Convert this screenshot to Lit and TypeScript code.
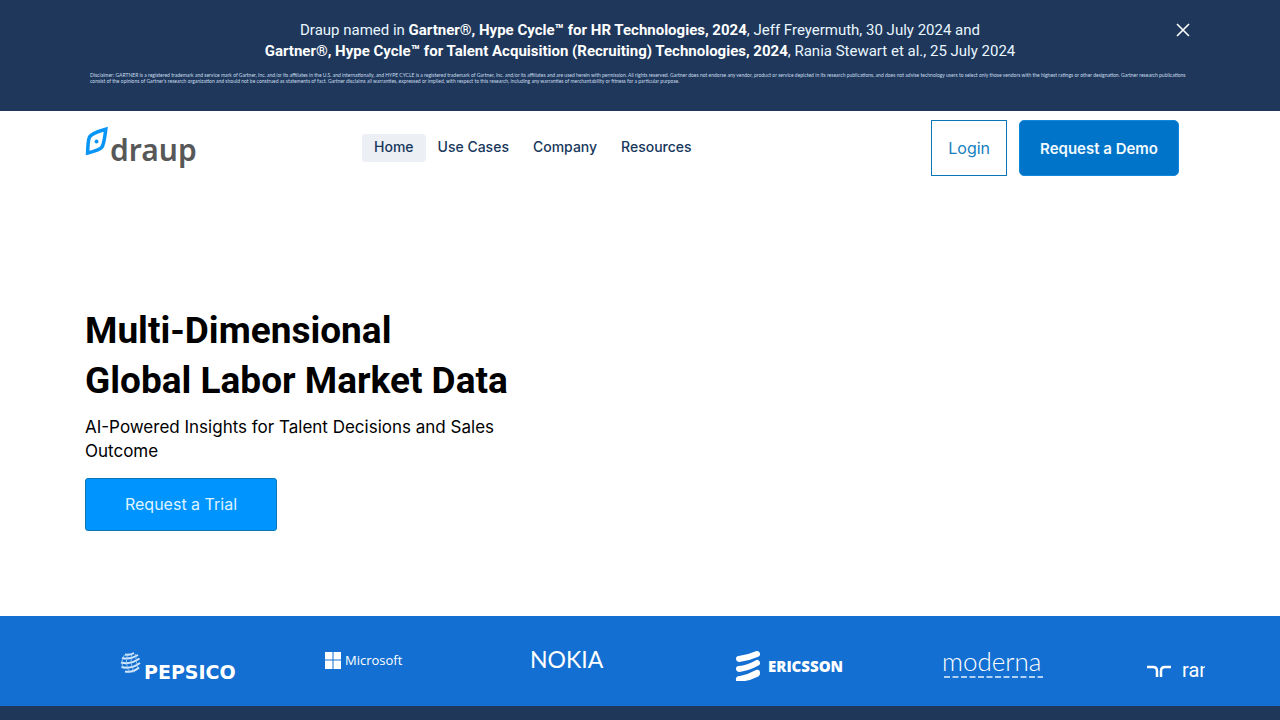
import { LitElement, html, css, svg } from "lit";
import { customElement, state } from "lit/decorators.js";

const logos = [
  {
    name: "PepsiCo",
    art: svg`
      <g fill="none" stroke="#d3e8fb" stroke-width="2">
        <path d="M5 8.500Q10 9.500 14 7M2 12Q10 14 18 9M1 16.500Q10 19 19.500 12.500M1.500 21Q11 23.500 20 17M5 25.500Q13 27 19 21.500" />
      </g>
      <g fill="none" stroke="#a9cff3" stroke-width="0.800">
        <path d="M4.500 9Q0 15 3.500 23M8 7.500Q4 16 9.500 26.500M12 7Q9.500 16 14 26.500M15.500 8Q16 16 18 23" />
      </g>
      <text class="pepsico" x="24" y="33">PEPSICO</text>`,
  },
  {
    name: "Microsoft",
    art: svg`
      <path fill="#fff" d="M0 6h7.500v7.500H0zM8.500 6H16v7.500H8.500zM0 14.500h7.500V23H0zM8.500 14.500H16V23H8.500z" />
      <text class="microsoft" x="20" y="19">Microsoft</text>`,
  },
  { name: "Nokia", art: svg`<text class="nokia" x="-1" y="22">NOKIA</text>` },
  {
    name: "Ericsson",
    art: svg`
      <g fill="none" stroke="#fff" stroke-width="6" stroke-linecap="round">
        <path d="M3 13Q12 12 21 8M3 23Q12 22 21 17" />
      </g>
      <path fill="#fff" d="M0 35Q-1 30 4 30Q13 28 20 24Q24 23 24 27Q24 30 21 31Q15 34 9 35Z" />
      <text class="ericsson" x="32" y="26">ERICSSON</text>`,
  },
  {
    name: "Moderna",
    art: svg`
      <text class="moderna" x="0" y="25">moderna</text>
      <path fill="none" stroke="#e6f2fd" stroke-width="1.500" stroke-dasharray="6 2.500" d="M2 31H101" />`,
  },
  {
    name: "Randstad",
    art: svg`
      <path fill="none" stroke="#fff" stroke-width="2.500" d="M0 21H6Q10 21 10 25V31M24 21H18Q14 21 14 25V31" />
      <text class="randstad" x="35" y="31">randstad</text>`,
  },
];

@customElement("app-root")
class AppRoot extends LitElement {
  static styles = css`
    :host {
      display: block;
      min-height: 100vh;
      background: #1f385a;
      color: #000;
      font-family: "Inter", "Liberation Sans", sans-serif;
    }
    * {
      box-sizing: border-box;
    }
    a {
      color: inherit;
      text-decoration: none;
    }
    .container {
      width: 100%;
      max-width: 1140px;
      margin: 0 auto;
      padding: 0 15px;
    }
    .banner {
      position: relative;
      background: #1e375b;
      color: #e9f6ff;
      padding: 20px 0 27px;
    }
    .notice {
      margin: 0;
      text-align: center;
      font: 15px/21px "Roboto", sans-serif;
    }
    .notice b {
      color: #fff;
    }
    .disclaimer {
      margin: 10px 5px 0;
      color: #c9dcec;
      font: 5px/6px "Lato", sans-serif;
    }
    .close {
      position: absolute;
      top: 22px;
      right: 89px;
      display: grid;
      padding: 0;
      border: 0;
      background: none;
      cursor: pointer;
    }
    .page {
      background: #fff;
    }
    .header {
      display: flex;
      align-items: center;
      padding-top: 9px;
      padding-right: 31px;
    }
    .brand {
      display: flex;
      margin-right: 157px;
    }
    .brand text {
      font: 600 30px "Noto Sans", sans-serif;
      fill: #585858;
    }
    .nav {
      display: flex;
    }
    .nav a {
      padding: 0 12px 2px;
      border-radius: 4px;
      color: #17375c;
      font-size: 14px;
      font-weight: 500;
      line-height: 26px;
    }
    .nav .active {
      background: #eceff4;
    }
    .actions {
      display: flex;
      gap: 12px;
      margin-left: auto;
    }
    .login,
    .demo,
    .trial {
      display: grid;
      place-items: center;
      border: 1px solid #0a76b5;
    }
    .login {
      height: 56px;
      padding: 0 16px;
      color: #157ebe;
      font-size: 16px;
    }
    .demo {
      height: 56px;
      padding: 0 20px;
      border-color: #1187dc;
      border-radius: 5px;
      background: #0074c8;
      color: #f2faff;
      font-size: 15px;
      font-weight: 600;
    }
    .hero {
      padding-top: 130px;
      padding-bottom: 85px;
    }
    h1 {
      margin: 0;
      font: bold 37px/50px "Roboto", sans-serif;
    }
    .lead {
      max-width: 450px;
      margin: 9px 0 15px;
      font-size: 17px;
      line-height: 24px;
    }
    .trial {
      width: 192px;
      height: 53px;
      padding-bottom: 2px;
      border-radius: 3px;
      background: #0094ff;
      color: #dff3ff;
      font-size: 16px;
    }
    .clients {
      background: #136fd1;
      padding: 30px 0 24px;
    }
    .track {
      display: flex;
      width: 100%;
      max-width: 1130px;
      margin: 0 auto;
      padding: 0;
      overflow: hidden;
      list-style: none;
    }
    .slide {
      flex: 0 0 calc(100% / 5.5);
      padding-left: 45px;
    }
    .slide svg {
      display: block;
      overflow: visible;
    }
    .slide text {
      fill: #fff;
    }
    .pepsico {
      font: bold 19px "DejaVu Sans", sans-serif;
    }
    .microsoft {
      font: 13px "Open Sans", sans-serif;
    }
    .nokia {
      font: 23px "Lato", sans-serif;
    }
    .ericsson {
      font: 800 15px "Open Sans", sans-serif;
    }
    .moderna {
      font: 300 26px "Lato", sans-serif;
    }
    .randstad {
      font: 20px "Roboto", sans-serif;
    }
  `;

  @state() private bannerOpen = true;

  private renderBanner() {
    return html`<aside class="banner">
      <div class="container">
        <p class="notice">
          Draup named in <b>Gartner®, Hype Cycle™ for HR Technologies, 2024</b>, Jeff Freyermuth, 30 July 2024 and<br />
          <b>Gartner®, Hype Cycle™ for Talent Acquisition (Recruiting) Technologies, 2024</b>, Rania Stewart et al., 25 July 2024
        </p>
        <p class="disclaimer">
          Disclaimer: GARTNER is a registered trademark and service mark of Gartner, Inc. and/or its affiliates in the U.S. and internationally, and HYPE CYCLE is a registered trademark of Gartner, Inc. and/or its affiliates and are used herein with permission. All rights reserved. Gartner does not endorse any vendor, product or service depicted in its research publications, and does not advise technology users to select only those vendors with the highest ratings or other designation. Gartner research publications consist of the opinions of Gartner's research organization and should not be construed as statements of fact. Gartner disclaims all warranties, expressed or implied, with respect to this research, including any warranties of merchantability or fitness for a particular purpose.
        </p>
      </div>
      <button class="close" aria-label="Close" @click=${() => (this.bannerOpen = false)}>
        <svg width="16" height="16" viewBox="0 0 16 16" fill="none" stroke="#fff" stroke-width="1.600">
          <path d="M2 2L14 14M14 2L2 14" />
        </svg>
      </button>
    </aside>`;
  }

  render() {
    return html`
      ${this.bannerOpen ? this.renderBanner() : null}
      <div class="page">
        <header class="container header">
          <a class="brand" href="#" aria-label="Draup">
            <svg width="120" height="44" viewBox="0 0 120 44">
              <path fill="none" stroke="#0795f7" stroke-width="3.500" d="M20.800 3.200Q19 18 17 21Q15 24 2.600 27Q3 14 4.500 11Q7 7 20.800 3.200Z" />
              <circle cx="11.500" cy="15.500" r="2" fill="#0795f7" />
              <text x="25" y="35">draup</text>
            </svg>
          </a>
          <nav class="nav">
            <a class="active" href="#">Home</a>
            <a href="#use-cases">Use Cases</a>
            <a href="#company">Company</a>
            <a href="#resources">Resources</a>
          </nav>
          <div class="actions">
            <a class="login" href="#login">Login</a>
            <a class="demo" href="#demo">Request a Demo</a>
          </div>
        </header>
        <main class="container hero">
          <h1>Multi-Dimensional<br />Global Labor Market Data</h1>
          <p class="lead">AI-Powered Insights for Talent Decisions and Sales Outcome</p>
          <a class="trial" href="#trial">Request a Trial</a>
        </main>
      </div>
      <section class="clients" aria-label="Clients">
        <ul class="track">
          ${logos.map(
            (logo) => html`<li class="slide">
              <svg width="130" height="36" viewBox="0 0 130 36" role="img" aria-label=${logo.name}>${logo.art}</svg>
            </li>`
          )}
        </ul>
      </section>
    `;
  }
}
